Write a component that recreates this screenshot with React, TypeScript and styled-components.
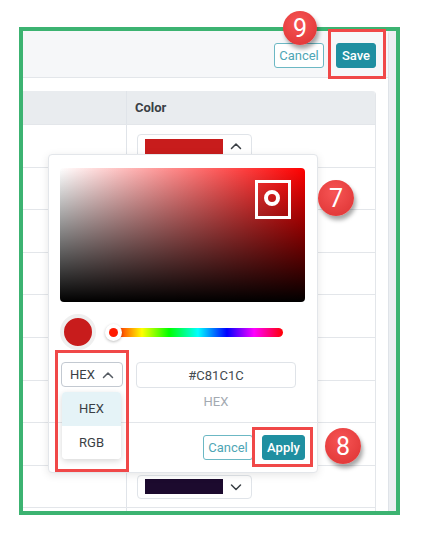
import React from "react";
import styled, { createGlobalStyle } from "styled-components";

const GlobalStyle = createGlobalStyle`
  html, body {
    margin: 0;
    padding: 0;
    background: #ffffff;
    font-family: Roboto, "Liberation Sans", Arial, sans-serif;
  }
  * {
    box-sizing: border-box;
  }
`;

const Stage = styled.div`
  position: relative;
  width: 427px;
  height: 533px;
  overflow: hidden;
  padding: 27px 0 0 19px;
`;

const Frame = styled.div`
  position: relative;
  width: 381px;
  height: 488px;
  border: 4px solid #3cb371;
  background: #eceff2;
  overflow: hidden;
`;

const Card = styled.div`
  width: 366px;
  height: 100%;
  background: #ffffff;
  border-right: 1px solid #dfe3e8;
  border-top-right-radius: 4px;
  display: flex;
  flex-direction: column;
`;

const Header = styled.div`
  height: 47px;
  flex: none;
  background: #f6f7f9;
  border-bottom: 1px solid #e3e6ea;
  display: flex;
  align-items: center;
  justify-content: flex-end;
  gap: 12px;
  padding: 2px 12px 0 0;
`;

const Button = styled.button<{ $primary?: boolean; $width: number }>`
  width: ${(p) => p.$width}px;
  height: 25px;
  padding: 0;
  border-radius: 3px;
  font-family: Roboto, "Liberation Sans", Arial, sans-serif;
  font-size: 13px;
  font-weight: ${(p) => (p.$primary ? 500 : 400)};
  color: ${(p) => (p.$primary ? "#ffffff" : "#4ea5b5")};
  background: ${(p) => (p.$primary ? "#1f8fa1" : "#ffffff")};
  border: 1px solid ${(p) => (p.$primary ? "#1f8fa1" : "#6cb8c4")};
`;

const Content = styled.div`
  flex: 1;
  min-height: 0;
  padding: 13px 13px 0 0;
`;

const Table = styled.div`
  width: 353px;
  border-right: 1px solid #e3e6ea;
  border-top-right-radius: 4px;
  overflow: hidden;
`;

const Row = styled.div<{ $head?: boolean }>`
  display: grid;
  grid-template-columns: 103px 1fr;
  height: ${(p) => (p.$head ? 34 : 42.6)}px;
  background: ${(p) => (p.$head ? "#e9ecef" : "#ffffff")};
  border-bottom: 1px solid #e3e6ea;
`;

const Cell = styled.div<{ $head?: boolean }>`
  display: flex;
  align-items: ${(p) => (p.$head ? "center" : "flex-start")};
  padding: ${(p) => (p.$head ? "0 8px" : "9px 10px 0")};
  border-left: 1px solid #e0e4e9;
  font-size: 13px;
  font-weight: 700;
  color: #3a3f45;

  &:first-child {
    border-left: none;
  }
`;

const ColorSelect = styled.div`
  width: 115px;
  height: 24px;
  border: 1px solid #e0e4e9;
  border-radius: 4px;
  background: #ffffff;
  display: flex;
  align-items: center;
  padding: 0 0 0 7px;
  gap: 7px;
`;

const SelectSwatch = styled.div<{ $color: string }>`
  width: 78px;
  height: 15px;
  background: ${(p) => p.$color};
`;

const Popover = styled.div`
  position: absolute;
  left: 25px;
  top: 123px;
  width: 270px;
  height: 319px;
  background: #ffffff;
  border: 1px solid #e3e6ea;
  border-radius: 4px;
  box-shadow: 0 2px 8px rgba(0, 0, 0, 0.1);
  display: flex;
  flex-direction: column;
`;

const PickerBody = styled.div`
  padding: 13px 11px 0;
`;

const Saturation = styled.div`
  position: relative;
  width: 245px;
  height: 134px;
  border-radius: 4px;
  background: linear-gradient(to top, #000000, rgba(0, 0, 0, 0)),
    linear-gradient(to right, #ffffff, #ff0000);
`;

const Marker = styled.div`
  position: absolute;
  left: 204px;
  top: 22px;
  width: 16px;
  height: 16px;
  border: 4px solid #ffffff;
  border-radius: 50%;
`;

const Controls = styled.div`
  display: flex;
  align-items: center;
  margin-top: 12px;
  height: 36px;
`;

const Preview = styled.div<{ $color: string }>`
  width: 36px;
  height: 36px;
  border-radius: 50%;
  background: ${(p) => p.$color};
  border: 4px solid #efefef;
  flex: none;
`;

const HueBar = styled.div`
  position: relative;
  margin-left: 17px;
  width: 170px;
  height: 9px;
  border-radius: 5px;
  background: linear-gradient(
    to right,
    #ff0000 0%,
    #ffff00 17%,
    #00ff00 33%,
    #00ffff 50%,
    #0000ff 67%,
    #ff00ff 83%,
    #ff0000 100%
  );
`;

const HueThumb = styled.div`
  position: absolute;
  left: -8px;
  top: -4px;
  width: 17px;
  height: 17px;
  border-radius: 50%;
  background: #ffffff;
  box-shadow: 0 1px 3px rgba(0, 0, 0, 0.25);
  display: flex;
  align-items: center;
  justify-content: center;

  &::after {
    content: "";
    width: 9px;
    height: 9px;
    border-radius: 50%;
    background: #ff1a00;
  }
`;

const FormatRow = styled.div`
  display: flex;
  align-items: flex-start;
  margin-top: 12px;
  gap: 13px;
`;

const FormatSelect = styled.div`
  width: 62px;
  height: 25px;
  margin-left: 1px;
  border: 1px solid #c3c9d1;
  border-radius: 4px;
  display: flex;
  align-items: center;
  justify-content: center;
  gap: 7px;
  font-size: 13px;
  color: #3a3f45;
`;

const ValueGroup = styled.div`
  display: flex;
  flex-direction: column;
  align-items: center;
  gap: 6px;
`;

const ValueInput = styled.div`
  width: 160px;
  height: 26px;
  border: 1px solid #dfe3e8;
  border-radius: 4px;
  display: flex;
  align-items: center;
  justify-content: center;
  font-size: 13px;
  color: #444a50;
`;

const ValueLabel = styled.div`
  font-size: 13px;
  color: #a3a9b1;
`;

const Footer = styled.div`
  margin-top: auto;
  height: 50px;
  border-top: 1px solid #e3e6ea;
  display: flex;
  justify-content: flex-end;
  align-items: flex-start;
  gap: 9px;
  padding: 12px 12px 0 0;
`;

const Menu = styled.div`
  position: absolute;
  left: 13px;
  top: 237px;
  width: 59px;
  background: #ffffff;
  border-radius: 4px;
  box-shadow: 0 2px 6px rgba(0, 0, 0, 0.16);
  overflow: hidden;
`;

const MenuItem = styled.div<{ $active?: boolean }>`
  height: 33.5px;
  display: flex;
  align-items: center;
  justify-content: center;
  font-size: 13px;
  color: #3a3f45;
  background: ${(p) => (p.$active ? "#e5f3f7" : "#ffffff")};
`;

const Highlight = styled.div<{ $color: string }>`
  position: absolute;
  border: 3px solid ${(p) => p.$color};
  pointer-events: none;
`;

const Badge = styled.div<{ $size: number }>`
  position: absolute;
  width: ${(p) => p.$size}px;
  height: ${(p) => p.$size}px;
  border-radius: 50%;
  background: radial-gradient(circle at 45% 35%, #f75555, #e43c3c 70%);
  box-shadow: 2px 4px 4px rgba(0, 0, 0, 0.35);
  color: #ffffff;
  font-size: 25px;
  display: flex;
  align-items: center;
  justify-content: center;
`;

function Chevron({ up, color = "#3a3f45" }: { up?: boolean; color?: string }) {
  return (
    <svg width="12" height="8" viewBox="0 0 12 8">
      <polyline
        points={up ? "1.5,6.5 6,2 10.5,6.5" : "1.5,2 6,6.5 10.5,2"}
        fill="none"
        stroke={color}
        strokeWidth="1.5"
        strokeLinecap="round"
        strokeLinejoin="round"
      />
    </svg>
  );
}

const rowColors = [
  "#c81c1c",
  "#1f6fb2",
  "#2e9d4c",
  "#e0a100",
  "#6b3fa0",
  "#333333",
  "#d9486b",
  "#0f7a75",
  "#1c0a2e",
  "#e8e8e8",
];

export default function App() {
  return (
    <>
      <GlobalStyle />
      <Stage>
        <Frame>
          <Card>
            <Header>
              <Button $width={50}>Cancel</Button>
              <Button $primary $width={40}>
                Save
              </Button>
            </Header>
            <Content>
              <Table>
                <Row $head>
                  <Cell $head />
                  <Cell $head>Color</Cell>
                </Row>
                {rowColors.map((c, i) => (
                  <Row key={c}>
                    <Cell />
                    <Cell>
                      <ColorSelect>
                        <SelectSwatch $color={c} />
                        <Chevron up={i === 0} />
                      </ColorSelect>
                    </Cell>
                  </Row>
                ))}
              </Table>
            </Content>
          </Card>

          <Popover>
            <PickerBody>
              <Saturation>
                <Marker />
              </Saturation>
              <Controls>
                <Preview $color="#c81c1c" />
                <HueBar>
                  <HueThumb />
                </HueBar>
              </Controls>
              <FormatRow>
                <FormatSelect>
                  HEX
                  <Chevron up color="#555b62" />
                </FormatSelect>
                <ValueGroup>
                  <ValueInput>#C81C1C</ValueInput>
                  <ValueLabel>HEX</ValueLabel>
                </ValueGroup>
              </FormatRow>
            </PickerBody>
            <Footer>
              <Button $width={50}>Cancel</Button>
              <Button $primary $width={43}>
                Apply
              </Button>
            </Footer>
            <Menu>
              <MenuItem $active>HEX</MenuItem>
              <MenuItem>RGB</MenuItem>
            </Menu>
          </Popover>
        </Frame>

        <Highlight $color="#ffffff" style={{ left: 255, top: 180, width: 36, height: 39 }} />
        <Highlight $color="#f04848" style={{ left: 328, top: 29, width: 58, height: 50 }} />
        <Highlight $color="#f04848" style={{ left: 55, top: 350, width: 74, height: 122 }} />
        <Highlight $color="#f04848" style={{ left: 252, top: 427, width: 61, height: 40 }} />

        <Badge $size={34} style={{ left: 283, top: 11 }}>9</Badge>
        <Badge $size={36} style={{ left: 318, top: 180 }}>7</Badge>
        <Badge $size={36} style={{ left: 325, top: 428 }}>8</Badge>
      </Stage>
    </>
  );
}
